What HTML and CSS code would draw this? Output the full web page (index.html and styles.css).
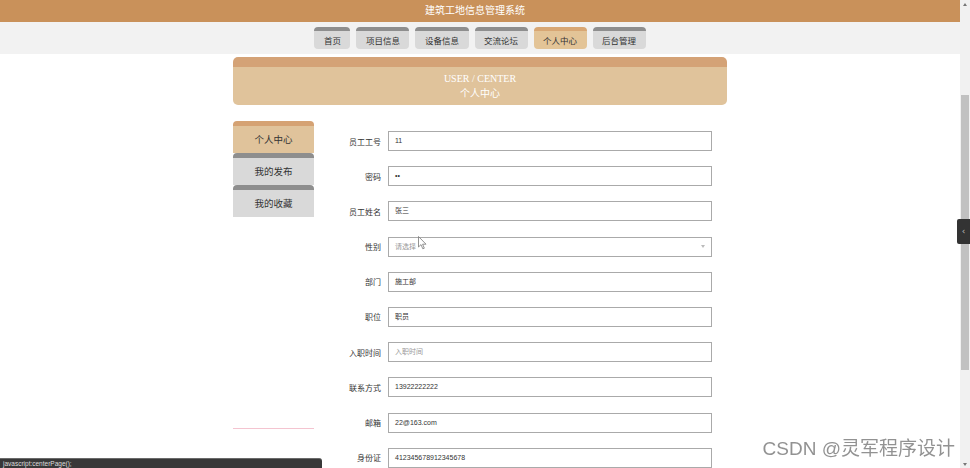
FILE: index.html
```html
<!DOCTYPE html>
<html lang="zh-CN">
<head>
<meta charset="utf-8">
<title>建筑工地信息管理系统</title>
<link rel="stylesheet" href="styles.css">
</head>
<body>
<div class="app">
  <div class="page">
    <header class="topbar">建筑工地信息管理系统</header>
    <nav class="nav">
      <a class="nav-btn">首页</a>
      <a class="nav-btn">项目信息</a>
      <a class="nav-btn">设备信息</a>
      <a class="nav-btn">交流论坛</a>
      <a class="nav-btn active">个人中心</a>
      <a class="nav-btn">后台管理</a>
    </nav>
    <main class="container">
      <div class="banner">
        <div class="banner-en">USER / CENTER</div>
        <div class="banner-cn">个人中心</div>
      </div>
      <div class="content">
        <aside class="side">
          <div class="side-item active">个人中心</div>
          <div class="side-item">我的发布</div>
          <div class="side-item">我的收藏</div>
          <div class="side-line"></div>
        </aside>
        <form class="form">
          <div class="row"><label>员工工号</label><div class="input">11</div></div>
          <div class="row"><label>密码</label><div class="input">••</div></div>
          <div class="row"><label>员工姓名</label><div class="input">张三</div></div>
          <div class="row"><label>性别</label><div class="input select"><span class="ph">请选择</span><span class="caret"></span></div></div>
          <div class="row"><label>部门</label><div class="input">施工部</div></div>
          <div class="row"><label>职位</label><div class="input">职员</div></div>
          <div class="row"><label>入职时间</label><div class="input"><span class="ph">入职时间</span></div></div>
          <div class="row"><label>联系方式</label><div class="input">13922222222</div></div>
          <div class="row"><label>邮箱</label><div class="input">22@163.com</div></div>
          <div class="row"><label>身份证</label><div class="input">412345678912345678</div></div>
        </form>
      </div>
    </main>
  </div>
  <div class="scrollbar">
    <div class="sb-arrow up"></div>
    <div class="sb-track"><div class="sb-thumb"></div></div>
    <div class="sb-arrow down"></div>
  </div>
</div>
<div class="side-tab">‹</div>
<svg class="cursor" width="9" height="14" viewBox="0 0 9 14"><path d="M0.5 0.5 L0.5 11 L3 8.6 L4.8 12.8 L6.3 12.2 L4.6 8.2 L8 8.2 Z" fill="#fff" stroke="#777" stroke-width="0.8"/></svg>
<div class="statusbar">javascript:centerPage();</div>
<div class="watermark">CSDN @灵军程序设计</div>
</body>
</html>
```
FILE: styles.css
```css
* { box-sizing: border-box; }
html, body { margin: 0; padding: 0; height: 100%; overflow: hidden; }
body {
  font-family: "Noto Sans CJK SC", "Liberation Sans", sans-serif;
  color: #333;
  background: #fff;
}
.app { display: flex; width: 970px; height: 468px; }
.page { width: 960px; flex: none; }

.topbar {
  height: 22px;
  background: #c9915a;
  color: #fff;
  font-size: 10px;
  line-height: 20px;
  text-align: center;
  padding-right: 10px;
}

.nav {
  height: 32px;
  background: #f2f2f2;
  display: flex;
  justify-content: center;
  gap: 6px;
  padding-top: 5px;
}
.nav-btn {
  height: 22px;
  padding: 0 9.5px;
  border-top: 4px solid #8e8e8e;
  background: #d9d9d9;
  border-radius: 4px;
  font-size: 8.5px;
  line-height: 18px;
  color: #333;
}
.nav-btn.active { border-top-color: #d8a774; background: #e3c497; }

.container { width: 494px; margin: 3px auto 0; }

.banner {
  border-radius: 5px;
  overflow: hidden;
  background: #e0c39b;
  border-top: 10px solid #d4a276;
  padding: 5px 0;
  text-align: center;
  color: #fff;
}
.banner-en { font-family: "Liberation Serif", serif; font-size: 10px; line-height: 14px; }
.banner-cn { font-size: 10px; line-height: 14px; }

.content { display: flex; margin-top: 16px; }

.side { width: 81px; flex: none; display: flex; flex-direction: column; }
.side-item {
  height: 32px;
  border-top: 5px solid #8e8e8e;
  background: #d9d9d9;
  border-radius: 4px 4px 0 0;
  text-align: center;
  font-size: 9.5px;
  line-height: 27px;
  color: #333;
}
.side-item.active { border-top-color: #d5a273; background: #e0c39b; }
.side-line { margin-top: 211px; height: 1px; background: #f4c4d0; }

.form {
  margin: 0 0 0 20px;
  padding-top: 10px;
  display: flex;
  flex-direction: column;
  gap: 15.2px;
}
.row { display: flex; align-items: center; gap: 7px; height: 20px; }
.row label { width: 47px; text-align: right; font-size: 8px; color: #333; }
.input {
  width: 324px;
  height: 20px;
  border: 1px solid #aaa;
  padding: 0 6px;
  font-family: "Liberation Sans", "Noto Sans CJK SC", sans-serif;
  font-size: 7px;
  line-height: 18px;
  color: #333;
  display: flex;
  align-items: center;
}
.ph { color: #999; }
.select { justify-content: space-between; }
.caret {
  width: 0; height: 0;
  border-left: 2.5px solid transparent;
  border-right: 2.5px solid transparent;
  border-top: 3px solid #bbb;
}

.scrollbar {
  width: 10px;
  flex: none;
  background: #f1f1f1;
  display: flex;
  flex-direction: column;
  align-items: center;
}
.sb-arrow { height: 8px; width: 10px; display: flex; align-items: center; justify-content: center; }
.sb-arrow.up::before {
  content: ""; width: 0; height: 0;
  border-left: 2.5px solid transparent; border-right: 2.5px solid transparent;
  border-bottom: 3px solid #777;
}
.sb-arrow.down::before {
  content: ""; width: 0; height: 0;
  border-left: 2.5px solid transparent; border-right: 2.5px solid transparent;
  border-top: 3px solid #777;
}
.sb-track { flex: 1; width: 10px; display: flex; flex-direction: column; align-items: center; }
.sb-thumb { margin-top: 87px; width: 8px; height: 275px; background: #c1c1c1; }

.side-tab {
  position: fixed;
  right: 0;
  top: 219px;
  width: 13px;
  height: 25px;
  background: #333;
  border-radius: 2px 0 0 2px;
  color: #bbb;
  font-family: "DejaVu Sans", sans-serif;
  font-size: 9px;
  line-height: 24px;
  text-align: center;
}
.cursor { position: fixed; left: 418px; top: 236px; }

.statusbar {
  position: fixed;
  left: 0;
  bottom: 0;
  width: 322px;
  height: 10px;
  background: #383838;
  border-top: 1px solid #6a6a6a;
  border-top-right-radius: 3px;
  color: #ddd;
  font-family: "Liberation Sans", sans-serif;
  font-size: 6.5px;
  line-height: 9px;
  padding-left: 3px;
}
.watermark {
  position: fixed;
  right: 15px;
  bottom: 8px;
  font-family: "Liberation Sans", "Noto Sans CJK SC", sans-serif;
  font-size: 19px;
  line-height: 22px;
  color: rgba(110, 110, 110, 0.75);
  white-space: nowrap;
}
```
